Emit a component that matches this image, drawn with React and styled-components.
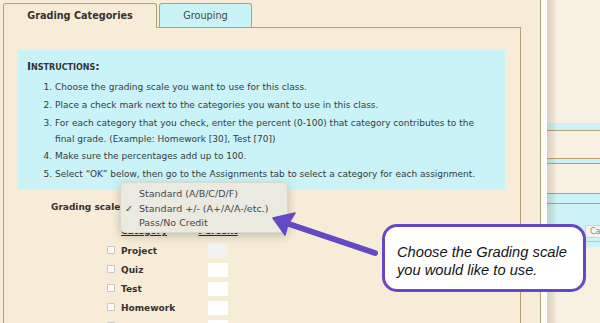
import React from "react";
import styled, { createGlobalStyle } from "styled-components";

const tan = "#b5a072";
const cyan = "#c9f3f6";
const cream = "#f7ecd7";
const purple = "#6549c4";

const GlobalStyle = createGlobalStyle`
  html, body { margin: 0; padding: 0; }
  body {
    background: ${cream};
    font-family: "DejaVu Sans", Verdana, sans-serif;
    color: #353535;
  }
`;

const Page = styled.div`
  position: relative;
  display: flex;
  width: 600px;
  height: 323px;
  overflow: hidden;
`;

// 왼쪽 메인 영역 (탭 + 내용)
const Main = styled.div`
  display: flex;
  flex-direction: column;
  box-sizing: border-box;
  flex-shrink: 0;
  width: 541px;
  padding: 3px 0 0 3px;
  border-right: 1px solid ${tan};
`;

const TabBar = styled.div`
  position: relative;
  z-index: 1;
  display: flex;
  align-items: flex-end;
  gap: 2px;
  margin-bottom: -1px;
`;

const Tab = styled.div`
  box-sizing: border-box;
  display: flex;
  align-items: center;
  justify-content: center;
  width: ${(p) => p.$width}px;
  height: ${(p) => (p.$active ? 25 : 24)}px;
  margin-bottom: ${(p) => (p.$active ? 0 : 1)}px;
  padding-bottom: ${(p) => (p.$active ? 2 : 0)}px;
  border: 1px solid ${tan};
  border-bottom: none;
  border-radius: 3px 3px 0 0;
  background: ${(p) => (p.$active ? cream : cyan)};
  font-size: 9.7px;
  font-weight: ${(p) => (p.$active ? 700 : 400)};
  color: ${(p) => (p.$active ? "#333" : "#454545")};
`;

const TabBody = styled.div`
  flex: 1;
  box-sizing: border-box;
  width: 518px;
  border: 1px solid ${tan};
  border-bottom: none;
  padding: 22px 15px 0 14px;
`;

const InstructionBox = styled.div`
  box-sizing: border-box;
  height: 139px;
  padding: 10px 20px 0 9px;
  background: ${cyan};
`;

const Title = styled.div`
  font-size: 11px;
  line-height: 14px;
  font-weight: 700;
  font-variant: small-caps;
  color: #333;
`;

const Steps = styled.ol`
  margin: 5px 0 0;
  padding-left: 28px;
  font-size: 9px;
  line-height: 16px;
  color: #3a3a3a;
  li {
    margin-bottom: 1.75px;
  }
`;

const ScaleRow = styled.div`
  position: relative;
  display: flex;
  align-items: center;
  height: 14px;
  margin: 11px 0 0 33px;
`;

const Label = styled.span`
  font-size: 9px;
  font-weight: 700;
  color: #333;
`;

// 열린 select 메뉴
const Menu = styled.div`
  position: absolute;
  left: 69px;
  top: -18px;
  z-index: 2;
  box-sizing: border-box;
  width: 168px;
  height: 51px;
  padding-top: 4px;
  border-radius: 5px;
  border: 1px solid rgba(0, 0, 0, 0.07);
  background: #ebeae1;
  box-shadow: 0 3px 10px rgba(0, 0, 0, 0.22);
`;

const MenuItem = styled.div`
  display: grid;
  grid-template-columns: 14px 1fr;
  padding-left: 4px;
  height: 14.5px;
  line-height: 14.5px;
  font-size: 9.5px;
  color: #474747;
`;

const Table = styled.div`
  display: grid;
  grid-template-columns: 14px 78px 38px;
  grid-auto-rows: 19px;
  grid-template-rows: 17px;
  margin: 10px 0 0 89px;
  align-items: center;
`;

const Head = styled.span`
  grid-column: ${(p) => p.$col};
  align-self: start;
  justify-self: ${(p) => (p.$col === 3 ? "center" : "start")};
  line-height: 14px;
  font-size: 9px;
  font-weight: 700;
  text-decoration: underline;
  color: #333;
`;

const Check = styled.span`
  box-sizing: border-box;
  width: 8px;
  height: 8px;
  margin-top: -2px;
  border: 1px solid #c9c6bd;
  border-radius: 1px;
  background: #fff;
`;

const Name = styled.span`
  font-size: 9px;
  font-weight: 700;
  color: #333;
`;

const Percent = styled.span`
  justify-self: center;
  width: 20px;
  height: 14px;
  background: ${(p) => (p.$first ? "#f1f1ef" : "#fff")};
`;

const Gap = styled.div`
  flex-shrink: 0;
  width: 6px;
  background: #fff;
`;

// 오른쪽 뒤쪽 창
const Side = styled.div`
  position: relative;
  flex: 1;
  display: flex;
  flex-direction: column;
  background: #f8f0e2;
  &::after {
    content: "";
    position: absolute;
    left: 0;
    top: 0;
    bottom: 0;
    width: 10px;
    background: linear-gradient(90deg, rgba(120, 100, 70, 0.22), rgba(120, 100, 70, 0.12) 6px, rgba(120, 100, 70, 0));
  }
`;

const Strip = styled.div`
  margin-top: ${(p) => p.$top}px;
  height: ${(p) => p.$h}px;
  background: ${cyan};
  border-top: ${(p) => (p.$lineTop ? `1px solid ${tan}` : "none")};
  border-bottom: 1px solid ${tan};
`;

const HeaderBand = styled.div`
  height: 43px;
  padding-top: 21px;
  box-sizing: border-box;
  background: #cdf3f6;
`;

const HeaderLine = styled.div`
  padding-bottom: 3px;
  border-bottom: 1px solid #94d3d6;
  padding-left: 38px;
`;

const CatBox = styled.div`
  height: 13px;
  box-sizing: border-box;
  padding-left: 4px;
  line-height: 12px;
  font-size: 8px;
  color: #8a8a8a;
  background: #f4f2ec;
  border: 1px solid #d5d2c8;
  border-right: none;
`;

const Arrow = styled.svg`
  position: absolute;
  left: 265px;
  top: 205px;
  z-index: 3;
  overflow: visible;
`;

const Callout = styled.div`
  position: absolute;
  left: 382px;
  top: 224px;
  z-index: 3;
  box-sizing: border-box;
  width: 204px;
  height: 68px;
  padding: 16px 0 0 12px;
  border: 3px solid ${purple};
  border-radius: 15px;
  background: #fff;
  font-family: "Liberation Sans", Arial, sans-serif;
  font-style: italic;
  font-size: 14.7px;
  line-height: 18px;
  color: #151515;
`;

const steps = [
  "Choose the grading scale you want to use for this class.",
  "Place a check mark next to the categories you want to use in this class.",
  "For each category that you check, enter the percent (0-100) that category contributes to the final grade. (Example: Homework [30], Test [70])",
  "Make sure the percentages add up to 100.",
  "Select \u201COK\u201D below, then go to the Assignments tab to select a category for each assignment.",
];

const scales = [
  { text: "Standard (A/B/C/D/F)", checked: false },
  { text: "Standard +/- (A+/A/A-/etc.)", checked: true },
  { text: "Pass/No Credit", checked: false },
];

// 마지막 줄은 화면 아래로 잘림
const categories = ["Project", "Quiz", "Test", "Homework", ""];

const App = () => {
  return (
    <Page>
      <GlobalStyle />
      <Main>
        <TabBar>
          <Tab $active $width={154}>Grading Categories</Tab>
          <Tab $width={93}>Grouping</Tab>
        </TabBar>
        <TabBody>
          <InstructionBox>
            <Title>Instructions:</Title>
            <Steps>
              {steps.map((s) => (
                <li key={s}>{s}</li>
              ))}
            </Steps>
          </InstructionBox>

          <ScaleRow>
            <Label>Grading scale</Label>
            <Menu>
              {scales.map((s) => (
                <MenuItem key={s.text}>
                  <span>{s.checked ? "\u2713" : ""}</span>
                  <span>{s.text}</span>
                </MenuItem>
              ))}
            </Menu>
          </ScaleRow>

          <Table>
            <Head $col={2}>Category</Head>
            <Head $col={3}>Percent</Head>
            {categories.map((c, i) => (
              <React.Fragment key={i}>
                <Check />
                <Name>{c}</Name>
                <Percent $first={i === 0} />
              </React.Fragment>
            ))}
          </Table>
        </TabBody>
      </Main>
      <Gap />
      <Side>
        <Strip $top={123} $h={7} />
        <Strip $top={27} $h={4} $lineTop />
        <Strip $top={29} $h={9} $lineTop />
        <HeaderBand>
          <HeaderLine>
            <CatBox>Cat</CatBox>
          </HeaderLine>
        </HeaderBand>
      </Side>

      {/* 설명 말풍선 + 화살표 */}
      <Arrow width="120" height="60" viewBox="0 0 120 60">
        <line x1="24" y1="19" x2="110" y2="48" stroke={purple} strokeWidth="6" strokeLinecap="round" />
        <polygon points="8,13 30,8 23,19 20,30" fill={purple} stroke={purple} strokeWidth="1.5" strokeLinejoin="round" />
      </Arrow>
      <Callout>
        Choose the Grading scale
        <br />
        you would like to use.
      </Callout>
    </Page>
  );
};

export default App;
